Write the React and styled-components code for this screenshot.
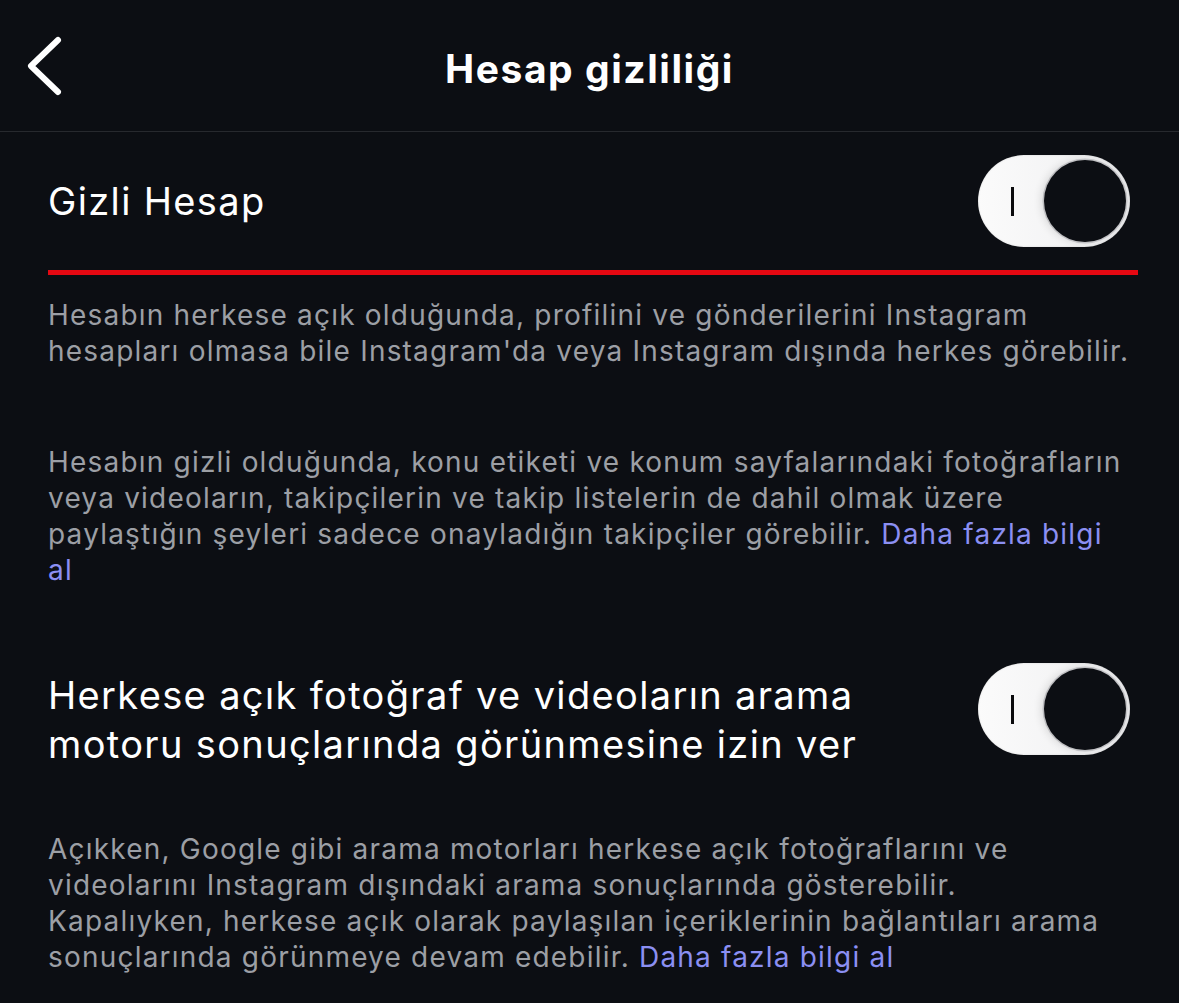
import React from "react";
import styled, { createGlobalStyle } from "styled-components";

const Global = createGlobalStyle`
  html, body {
    margin: 0;
    padding: 0;
    background: #0c0e13;
  }
  body {
    font-family: Inter, "Noto Sans", "Liberation Sans", sans-serif;
    -webkit-font-smoothing: antialiased;
  }
`;

const Page = styled.div`
  width: 1179px;
  min-height: 1003px;
  background: #0c0e13;
  color: #f5f5f7;
`;

const Header = styled.header`
  height: 132px;
  box-sizing: border-box;
  padding-top: 6px;
  display: flex;
  align-items: center;
  justify-content: center;
  position: relative;
  border-bottom: 1px solid #27292e;
`;

const BackButton = styled.button`
  position: absolute;
  left: 20px;
  top: 30px;
  width: 48px;
  height: 72px;
  padding: 0;
  border: 0;
  background: none;
  display: block;
`;

const Title = styled.h1`
  margin: 0;
  font-size: 39px;
  font-weight: 700;
  letter-spacing: 1.55px;
  color: #ffffff;
`;

const Content = styled.main`
  padding: 0 41px 0 48px;
`;

const SettingRow = styled.div`
  display: flex;
  align-items: ${(p) => (p.$top ? "flex-start" : "center")};
  justify-content: space-between;
  gap: 20px;
  height: ${(p) => p.$height}px;
  margin-top: ${(p) => p.$offset || 0}px;
`;

const SettingLabel = styled.div`
  font-size: 38px;
  line-height: 49px;
  font-weight: 400;
  color: #ffffff;
  letter-spacing: 1.35px;
  white-space: nowrap;
  padding-top: ${(p) => p.$pad || 0}px;
`;

const Accent = styled.div`
  height: 5px;
  background: #e50812;
`;

const Note = styled.p`
  margin: ${(p) => p.$top}px 0 0;
  font-size: 28px;
  line-height: 36px;
  color: #9c9fa5;
  letter-spacing: 1.2px;
  white-space: nowrap;
`;

const Link = styled.a`
  color: #8b8ff2;
  text-decoration: none;
`;

const Track = styled.div`
  flex: none;
  width: 152px;
  height: 92px;
  margin-right: 8px;
  border-radius: 46px;
  background: linear-gradient(90deg, #fbfbfb 0%, #f4f4f5 55%, #e9e9eb 100%);
  display: flex;
  align-items: center;
  justify-content: space-between;
  padding: 0 4px 0 33px;
  box-sizing: border-box;
  box-shadow: inset 0 0 2px rgba(0, 0, 0, 0.15);
`;

const OnMark = styled.span`
  width: 3px;
  height: 29px;
  background: #0b0b0d;
`;

const Knob = styled.span`
  width: 82px;
  height: 82px;
  border-radius: 50%;
  background: #0c0e13;
  box-shadow: -3px 0 8px rgba(0, 0, 0, 0.12), 0 0 0 1.5px rgba(180, 180, 185, 0.6);
`;

function Toggle() {
  return (
    <Track role="switch" aria-checked="true">
      <OnMark />
      <Knob />
    </Track>
  );
}

function ChevronLeft() {
  return (
    <svg width="48" height="72" viewBox="0 0 48 72" fill="none">
      <path
        d="M38 10 L11 36 L38 62"
        stroke="#ffffff"
        strokeWidth="6"
        strokeLinecap="round"
        strokeLinejoin="round"
      />
    </svg>
  );
}

export default function App() {
  return (
    <>
      <Global />
      <Page>
        <Header>
          <BackButton aria-label="Geri">
            <ChevronLeft />
          </BackButton>
          <Title>Hesap gizliliği</Title>
        </Header>
        <Content>
          <SettingRow $height={138}>
            <SettingLabel>Gizli Hesap</SettingLabel>
            <Toggle />
          </SettingRow>
          <Accent />
          <Note $top={22}>
            Hesabın herkese açık olduğunda, profilini ve gönderilerini Instagram
            <br />
            hesapları olmasa bile Instagram'da veya Instagram dışında herkes görebilir.
          </Note>
          <Note $top={75}>
            Hesabın gizli olduğunda, konu etiketi ve konum sayfalarındaki fotoğrafların
            <br />
            veya videoların, takipçilerin ve takip listelerin de dahil olmak üzere
            <br />
            paylaştığın şeyleri sadece onayladığın takipçiler görebilir.{" "}
            <Link href="#">
              Daha fazla bilgi
              <br />
              al
            </Link>
          </Note>
          <SettingRow $top $height={106} $offset={75}>
            <SettingLabel $pad={8}>
              Herkese açık fotoğraf ve videoların arama
              <br />
              motoru sonuçlarında görünmesine izin ver
            </SettingLabel>
            <Toggle />
          </SettingRow>
          <Note $top={62}>
            Açıkken, Google gibi arama motorları herkese açık fotoğraflarını ve
            <br />
            videolarını Instagram dışındaki arama sonuçlarında gösterebilir.
            <br />
            Kapalıyken, herkese açık olarak paylaşılan içeriklerinin bağlantıları arama
            <br />
            sonuçlarında görünmeye devam edebilir.{" "}
            <Link href="#">Daha fazla bilgi al</Link>
          </Note>
        </Content>
      </Page>
    </>
  );
}
